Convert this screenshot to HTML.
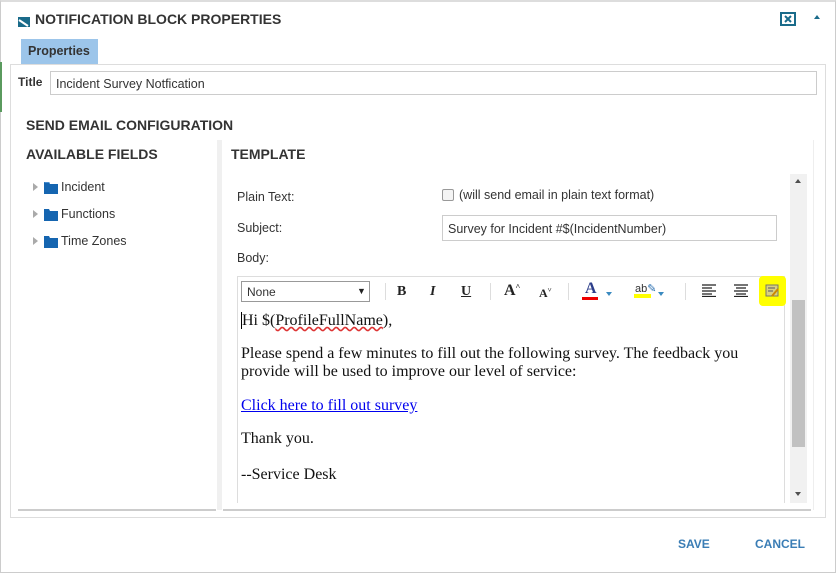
<!DOCTYPE html>
<html><head><meta charset="utf-8"><style>
*{box-sizing:border-box;margin:0;padding:0}
body{width:836px;height:573px;background:#fff;position:relative;overflow:hidden;font-family:"Liberation Sans",sans-serif;color:#222}
.a{position:absolute}
.h{font-weight:bold;font-size:14px;color:#333}
.lbl{font-size:12.5px;color:#333}
.ser{font-family:"Liberation Serif",serif;font-size:16px;color:#111}
.tb{position:absolute;top:284px;font-family:"Liberation Serif",serif;font-weight:bold;font-size:14px;color:#222}
.sep{position:absolute;top:283px;width:1px;height:17px;background:#ddd}
</style></head><body>
<div class="a" style="left:0;top:0;width:836px;height:573px;border:1px solid #ccc;border-top:2px solid #ddd"></div>
<svg class="a" style="left:18px;top:17px" width="12" height="10"><rect width="12" height="10" fill="#1a6b8a"/><path d="M1 3 L10 9" stroke="#fff" stroke-width="2"/></svg>
<div class="a" style="left:35px;top:11px;font-weight:bold;font-size:14px;color:#333">NOTIFICATION BLOCK PROPERTIES</div>
<svg class="a" style="left:780px;top:12px" width="16" height="14"><rect x="1" y="1" width="14" height="12" fill="none" stroke="#1a6b8a" stroke-width="2"/><path d="M5 4 L11 10 M11 4 L5 10" stroke="#1a6b8a" stroke-width="2"/></svg>
<div class="a" style="left:814px;top:15px;width:0;height:0;border-left:3px solid transparent;border-right:3px solid transparent;border-bottom:4px solid #1a6b8a"></div>
<div class="a" style="left:21px;top:39px;width:77px;height:25px;background:#9cc5ea"></div>
<div class="a" style="left:28px;top:44px;font-weight:bold;font-size:12.5px;color:#333">Properties</div>
<div class="a" style="left:10px;top:64px;width:816px;height:454px;border:1px solid #ddd"></div>
<div class="a" style="left:0;top:62px;width:2px;height:50px;background:#5a9a5e"></div>
<div class="a" style="left:18px;top:75px;font-weight:bold;font-size:12px;color:#333">Title</div>
<div class="a" style="left:50px;top:71px;width:767px;height:24px;border:1px solid #ccc"></div>
<div class="a lbl" style="left:56px;top:77px">Incident Survey Notfication</div>
<div class="a h" style="left:26px;top:117px">SEND EMAIL CONFIGURATION</div>
<div class="a h" style="left:26px;top:146px">AVAILABLE FIELDS</div>
<div class="a h" style="left:231px;top:146px">TEMPLATE</div>
<div class="a" style="left:217px;top:140px;width:5px;height:370px;background:#f0f0f0"></div>
<div class="a" style="left:18px;top:509px;width:198px;height:2px;background:#ccc"></div>
<div class="a" style="left:223px;top:509px;width:588px;height:2px;background:#ccc"></div>
<div class="a" style="left:813px;top:140px;width:1px;height:370px;background:#eee"></div>
<div class="a" style="left:33px;top:183px;width:0;height:0;border-top:4px solid transparent;border-bottom:4px solid transparent;border-left:5px solid #aaa"></div>
<svg class="a" style="left:43px;top:180px" width="16" height="15"><path d="M1 2 H6 L7 4 H15 V14 H1Z" fill="#1565b0"/><path d="M1 2 H6 L7 3 H2Z" fill="#4a8fd0"/></svg>
<div class="a lbl" style="left:61px;top:180px">Incident</div>
<div class="a" style="left:33px;top:210px;width:0;height:0;border-top:4px solid transparent;border-bottom:4px solid transparent;border-left:5px solid #aaa"></div>
<svg class="a" style="left:43px;top:207px" width="16" height="15"><path d="M1 2 H6 L7 4 H15 V14 H1Z" fill="#1565b0"/></svg>
<div class="a lbl" style="left:61px;top:207px">Functions</div>
<div class="a" style="left:33px;top:237px;width:0;height:0;border-top:4px solid transparent;border-bottom:4px solid transparent;border-left:5px solid #aaa"></div>
<svg class="a" style="left:43px;top:234px" width="16" height="15"><path d="M1 2 H6 L7 4 H15 V14 H1Z" fill="#1565b0"/></svg>
<div class="a lbl" style="left:61px;top:234px">Time Zones</div>
<div class="a lbl" style="left:237px;top:190px">Plain Text:</div>
<div class="a" style="left:442px;top:189px;width:12px;height:12px;border:1px solid #999;border-radius:2px;background:#f4f4f4"></div>
<div class="a lbl" style="left:459px;top:188px">(will send email in plain text format)</div>
<div class="a lbl" style="left:237px;top:221px">Subject:</div>
<div class="a" style="left:442px;top:215px;width:335px;height:26px;border:1px solid #ccc"></div>
<div class="a lbl" style="left:448px;top:222px">Survey for Incident #$(IncidentNumber)</div>
<div class="a lbl" style="left:237px;top:251px">Body:</div>
<div class="a" style="left:237px;top:276px;width:548px;height:227px;border:1px solid #ddd;border-bottom:none"></div>
<div class="a" style="left:241px;top:281px;width:129px;height:21px;border:1px solid #999"></div>
<div class="a" style="left:247px;top:285px;font-size:12px;color:#333">None</div>
<div class="a" style="left:357px;top:286px;font-size:9px;color:#222">▼</div>
<div class="sep" style="left:385px"></div>
<div class="tb" style="left:397px">B</div>
<div class="tb" style="left:430px;font-style:italic">I</div>
<div class="tb" style="left:461px;text-decoration:underline">U</div>
<div class="sep" style="left:490px"></div>
<div class="tb" style="left:504px;font-size:16px;top:282px">A<span style="font-size:8px;vertical-align:top">˄</span></div>
<div class="tb" style="left:539px;font-size:12px;top:286px">A<span style="font-size:7px;vertical-align:top">˅</span></div>
<div class="sep" style="left:568px"></div>
<div class="tb" style="left:585px;font-size:16px;top:280px;color:#2c3e8a">A</div>
<div class="a" style="left:582px;top:297px;width:16px;height:3px;background:#e00"></div>
<div class="a" style="left:606px;top:292px;width:0;height:0;border-left:3px solid transparent;border-right:3px solid transparent;border-top:4px solid #3a8ac0"></div>
<div class="a" style="left:635px;top:282px;font-size:11px;color:#333">ab<span style="color:#2a6fb0">✎</span></div>
<div class="a" style="left:634px;top:294px;width:17px;height:4px;background:#ff0"></div>
<div class="a" style="left:658px;top:292px;width:0;height:0;border-left:3px solid transparent;border-right:3px solid transparent;border-top:4px solid #3a8ac0"></div>
<div class="sep" style="left:685px"></div>
<svg class="a" style="left:701px;top:284px" width="16" height="13"><path d="M1 1H15M1 4H11M1 7H15M1 10H11M1 12.5H15" stroke="#222" stroke-width="1.2"/></svg>
<svg class="a" style="left:733px;top:284px" width="16" height="13"><path d="M1 1H15M3 4H13M1 7H15M3 10H13M1 12.5H15" stroke="#222" stroke-width="1.2"/></svg>
<div class="a" style="left:759px;top:276px;width:27px;height:30px;background:#ffff00;border-radius:4px"></div>
<svg class="a" style="left:765px;top:284px" width="15" height="14"><rect x="1" y="1" width="12" height="11" fill="#d8d080" stroke="#776"/><path d="M3 4H10M3 7H8" stroke="#556"/><path d="M7 12 L13 5" stroke="#c80" stroke-width="2"/></svg>
<div class="a ser" style="left:241px;top:312px"><span style="border-left:1px solid #000">Hi</span> $(<span style="text-decoration:underline wavy #d33">ProfileFullName</span>),</div>
<div class="a ser" style="left:241px;top:345px;width:515px;line-height:18px">Please spend a few minutes to fill out the following survey. The feedback you provide will be used to improve our level of service:</div>
<div class="a ser" style="left:241px;top:397px;color:#00e;text-decoration:underline">Click here to fill out survey</div>
<div class="a ser" style="left:241px;top:430px">Thank you.</div>
<div class="a ser" style="left:241px;top:466px">--Service Desk</div>
<div class="a" style="left:790px;top:174px;width:17px;height:329px;background:#f1f1f1"></div>
<div class="a" style="left:795px;top:179px;width:0;height:0;border-left:3px solid transparent;border-right:3px solid transparent;border-bottom:4px solid #505050"></div>
<div class="a" style="left:795px;top:492px;width:0;height:0;border-left:3px solid transparent;border-right:3px solid transparent;border-top:4px solid #505050"></div>
<div class="a" style="left:792px;top:300px;width:13px;height:147px;background:#c1c1c1"></div>
<div class="a" style="left:678px;top:537px;font-weight:bold;font-size:12px;color:#3a7db5">SAVE</div>
<div class="a" style="left:755px;top:537px;font-weight:bold;font-size:12px;color:#3a7db5">CANCEL</div>
</body></html>
